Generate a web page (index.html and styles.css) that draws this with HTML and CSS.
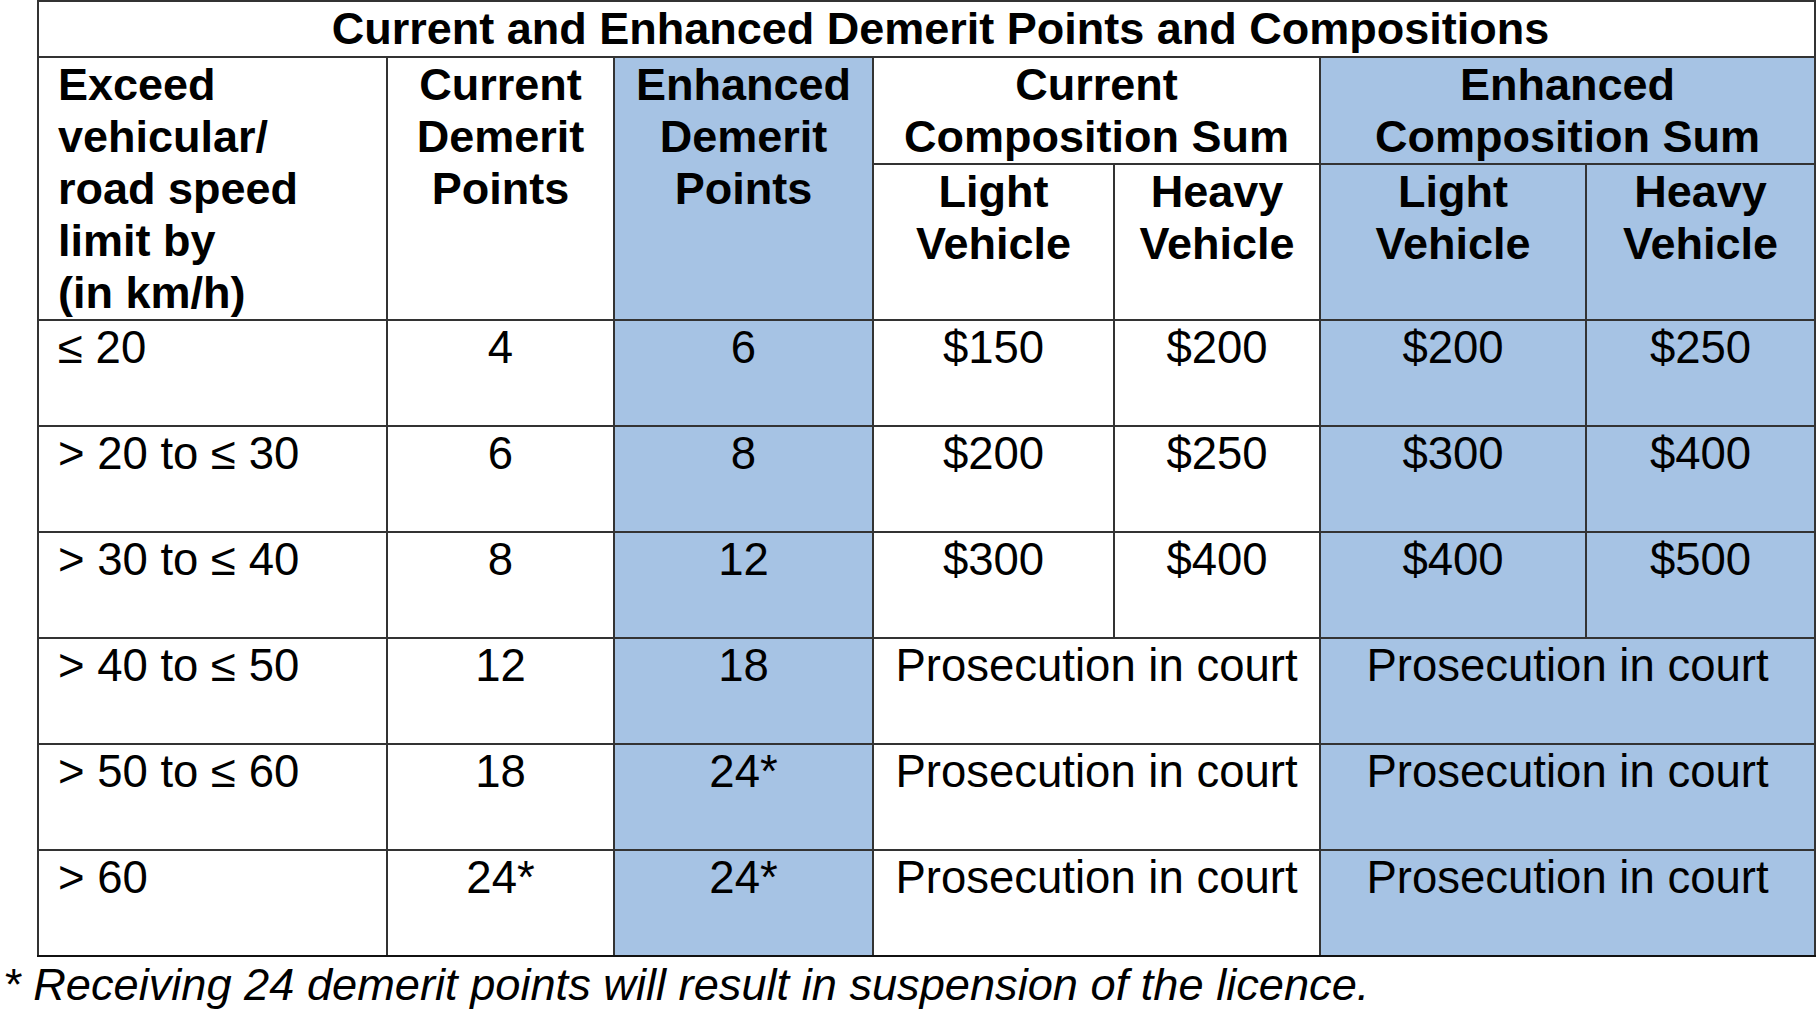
FILE: index.html
```html
<!DOCTYPE html>
<html lang="en">
<head>
<meta charset="utf-8">
<title>Current and Enhanced Demerit Points and Compositions</title>
<link rel="stylesheet" href="styles.css">
</head>
<body>
<table class="demerit">
  <colgroup>
    <col class="c1"><col class="c2"><col class="c3"><col class="c4"><col class="c5"><col class="c6"><col class="c7">
  </colgroup>
  <tr class="title-row">
    <th colspan="7" class="title">Current and Enhanced Demerit Points and Compositions</th>
  </tr>
  <tr class="head-row1">
    <th rowspan="2" class="left">Exceed<br>vehicular/<br>road speed<br>limit by<br>(in km/h)</th>
    <th rowspan="2">Current<br>Demerit<br>Points</th>
    <th rowspan="2" class="blue">Enhanced<br>Demerit<br>Points</th>
    <th colspan="2">Current<br>Composition Sum</th>
    <th colspan="2" class="blue">Enhanced<br>Composition Sum</th>
  </tr>
  <tr class="head-row2">
    <th>Light<br>Vehicle</th>
    <th>Heavy<br>Vehicle</th>
    <th class="blue">Light<br>Vehicle</th>
    <th class="blue">Heavy<br>Vehicle</th>
  </tr>
  <tr class="data-row">
    <td class="left">≤ 20</td><td>4</td><td class="blue">6</td>
    <td>$150</td><td>$200</td><td class="blue">$200</td><td class="blue">$250</td>
  </tr>
  <tr class="data-row">
    <td class="left">&gt; 20 to ≤ 30</td><td>6</td><td class="blue">8</td>
    <td>$200</td><td>$250</td><td class="blue">$300</td><td class="blue">$400</td>
  </tr>
  <tr class="data-row">
    <td class="left">&gt; 30 to ≤ 40</td><td>8</td><td class="blue">12</td>
    <td>$300</td><td>$400</td><td class="blue">$400</td><td class="blue">$500</td>
  </tr>
  <tr class="data-row">
    <td class="left">&gt; 40 to ≤ 50</td><td>12</td><td class="blue">18</td>
    <td colspan="2">Prosecution in court</td><td colspan="2" class="blue">Prosecution in court</td>
  </tr>
  <tr class="data-row">
    <td class="left">&gt; 50 to ≤ 60</td><td>18</td><td class="blue">24*</td>
    <td colspan="2">Prosecution in court</td><td colspan="2" class="blue">Prosecution in court</td>
  </tr>
  <tr class="data-row last">
    <td class="left">&gt; 60</td><td>24*</td><td class="blue">24*</td>
    <td colspan="2">Prosecution in court</td><td colspan="2" class="blue">Prosecution in court</td>
  </tr>
</table>
<p class="footnote">* Receiving 24 demerit points will result in suspension of the licence.</p>
</body>
</html>
```

FILE: styles.css
```css
html, body {
  margin: 0;
  padding: 0;
  background: #ffffff;
}

body {
  font-family: "Liberation Sans", Arial, sans-serif;
  color: #000000;
}

.demerit {
  margin-left: 37px;
  width: 1777px;
  border-collapse: collapse;
  table-layout: fixed;
  border: 2px solid #1a1a1a;
}

.c1 { width: 349px; }
.c2 { width: 227px; }
.c3 { width: 259px; }
.c4 { width: 241px; }
.c5 { width: 206px; }
.c6 { width: 266px; }
.c7 { width: 229px; }

.demerit th,
.demerit td {
  border: 2px solid #333333;
  vertical-align: top;
  text-align: center;
  padding: 1px 4px 0 4px;
  line-height: 52px;
  white-space: nowrap;
}

.demerit th {
  font-weight: bold;
  font-size: 45px;
}

.demerit td {
  font-weight: normal;
  font-size: 45.5px;
}

.demerit .left {
  text-align: left;
  padding-left: 19px;
}

.demerit .title {
  padding-left: 32px;
}

.demerit .blue {
  background: #a6c3e4;
}

.title-row { height: 56px; }
.head-row1 { height: 104px; }
.head-row2 { height: 156px; }
.data-row { height: 106px; }

.demerit .last td {
  border-bottom-color: #111111;
}

.footnote {
  margin: 2px 0 0 0;
  padding-left: 3px;
  font-size: 45.2px;
  line-height: 52px;
  font-style: italic;
}
```
